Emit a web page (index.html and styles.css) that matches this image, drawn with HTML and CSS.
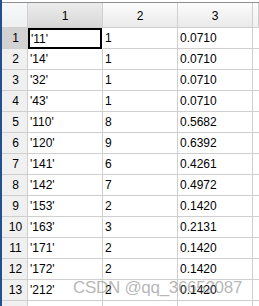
FILE: index.html
```html
<!DOCTYPE html>
<html>
<head>
<meta charset="utf-8">
<link rel="stylesheet" href="styles.css">
</head>
<body>
<div class="frame">
  <div class="edge"></div>
  <div class="sheet">
    <div class="grid">
      <div class="hd corner"></div>
      <div class="hd col sel">1</div>
      <div class="hd col">2</div>
      <div class="hd col">3</div>
      <div class="hd fill"></div>

      <div class="rh rsel">1</div><div class="c active">'11'</div><div class="c">1</div><div class="c">0.0710</div><div class="c fill"></div>
      <div class="rh">2</div><div class="c">'14'</div><div class="c">1</div><div class="c">0.0710</div><div class="c fill"></div>
      <div class="rh">3</div><div class="c">'32'</div><div class="c">1</div><div class="c">0.0710</div><div class="c fill"></div>
      <div class="rh">4</div><div class="c">'43'</div><div class="c">1</div><div class="c">0.0710</div><div class="c fill"></div>
      <div class="rh">5</div><div class="c">'110'</div><div class="c">8</div><div class="c">0.5682</div><div class="c fill"></div>
      <div class="rh">6</div><div class="c">'120'</div><div class="c">9</div><div class="c">0.6392</div><div class="c fill"></div>
      <div class="rh">7</div><div class="c">'141'</div><div class="c">6</div><div class="c">0.4261</div><div class="c fill"></div>
      <div class="rh">8</div><div class="c">'142'</div><div class="c">7</div><div class="c">0.4972</div><div class="c fill"></div>
      <div class="rh">9</div><div class="c">'153'</div><div class="c">2</div><div class="c">0.1420</div><div class="c fill"></div>
      <div class="rh">10</div><div class="c">'163'</div><div class="c">3</div><div class="c">0.2131</div><div class="c fill"></div>
      <div class="rh">11</div><div class="c">'171'</div><div class="c">2</div><div class="c">0.1420</div><div class="c fill"></div>
      <div class="rh">12</div><div class="c">'172'</div><div class="c">2</div><div class="c">0.1420</div><div class="c fill"></div>
      <div class="rh">13</div><div class="c">'212'</div><div class="c">2</div><div class="c">0.1420</div><div class="c fill"></div>
      <div class="rh"></div><div class="c"></div><div class="c"></div><div class="c"></div><div class="c fill"></div>
    </div>
  </div>
  <div class="watermark">CSDN @qq_36652087</div>
</div>
</body>
</html>
```

FILE: styles.css
```css
html, body {
  margin: 0;
  padding: 0;
  background: #ffffff;
}
body {
  width: 259px;
  height: 306px;
  overflow: hidden;
  font-family: "Liberation Sans", Arial, sans-serif;
  font-size: 12px;
  color: #000;
}
.frame {
  position: relative;
  display: flex;
  height: 306px;
}
.edge {
  width: 2px;
  flex: none;
  background: #22508f;
}
.sheet {
  flex: 1;
  padding-top: 2px;
  overflow: hidden;
}
.grid {
  display: grid;
  grid-template-columns: 26px 75px 75px 75px 1fr;
  grid-template-rows: 25px;
  grid-auto-rows: 21px;
  border-top: 1px solid #8e8e8e;
}
.grid > div {
  box-sizing: border-box;
  border-right: 1px solid #cfcfcf;
  border-bottom: 1px solid #cfcfcf;
  white-space: nowrap;
  overflow: hidden;
}
.hd {
  background: linear-gradient(#fcfcfc, #eaeaea);
  display: flex;
  align-items: center;
  justify-content: center;
  font-size: 12px;
  padding-top: 1px;
}
.hd.corner {
  background: linear-gradient(#f7f8f9, #eeeff0);
}
.hd.sel {
  background: linear-gradient(#ececec, #d8d8d8);
}
.hd.fill {
  background: linear-gradient(#fcfcfc, #f0f0f0);
}
.rh {
  background: #f0f0f0;
  display: flex;
  align-items: center;
  justify-content: center;
  padding-left: 2px;
}
.rh.rsel {
  background: #d2d2d2;
}
.c {
  display: flex;
  align-items: center;
  padding-left: 2px;
  background: #fff;
}
.c.active {
  border: 2px solid #000 !important;
  margin: 0 1px 0 0;
  padding-left: 1px;
}
.c.fill {
  background: #fff;
  border-right: none !important;
}
.watermark {
  position: absolute;
  left: 73px;
  top: 278px;
  font-size: 17px;
  color: rgba(120, 120, 120, 0.55);
  letter-spacing: -0.3px;
  white-space: nowrap;
}
```
